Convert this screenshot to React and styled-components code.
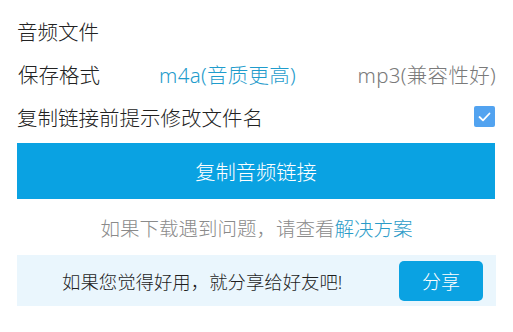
import React, { useState } from 'react'
import styled, { createGlobalStyle } from 'styled-components'

const GlobalStyle = createGlobalStyle`
  html, body {
    margin: 0;
    padding: 0;
    background: #ffffff;
    font-family: "Noto Sans", "Noto Sans CJK SC", sans-serif;
    font-weight: 300;
  }
`

const Page = styled.main`
  padding: 9px 17px 0 17px;
  width: 479px;
`

const Row = styled.div`
  display: flex;
  align-items: center;
  height: 43px;
  font-size: 20.5px;
  color: #222;
`

const Label = styled.span`
  width: 141px;
  flex-shrink: 0;
  padding-left: 1px;
`

const Option = styled.span`
  font-size: 20.5px;
  letter-spacing: 0.3px;
  color: ${p => (p.active ? '#1f9ccc' : '#7a7a7a')};
  margin-left: ${p => (p.right ? 'auto' : '0')};
`

const Check = styled.span`
  margin-left: auto;
  margin-right: 1px;
  width: 21px;
  height: 21px;
  border-radius: 2px;
  background: #52a3f0;
  display: flex;
  align-items: center;
  justify-content: center;
`

const CopyButton = styled.button`
  display: block;
  width: 478px;
  height: 56px;
  margin-top: 5px;
  border: none;
  background: #0aa2e2;
  color: #ffffff;
  font-family: inherit;
  font-weight: inherit;
  font-size: 20.3px;
  cursor: pointer;
`

const Help = styled.p`
  margin: 0;
  height: 56px;
  display: flex;
  align-items: center;
  justify-content: center;
  font-size: 19.5px;
  color: #8a8a8a;
`

const Link = styled.a`
  color: #2a9bc8;
  text-decoration: none;
`

const SharePanel = styled.section`
  display: flex;
  align-items: center;
  height: 51px;
  width: 479px;
  background: #eaf6fd;
  padding: 0 13px 0 45px;
  box-sizing: border-box;
`

const ShareText = styled.span`
  font-size: 18.4px;
  color: #1e1e1e;
`

const ShareButton = styled.button`
  margin-left: auto;
  width: 84px;
  height: 40px;
  border: none;
  border-radius: 5px;
  background: #0aa2e2;
  color: #ffffff;
  font-family: inherit;
  font-weight: inherit;
  font-size: 19px;
`

export default function App() {
  const [format, setFormat] = useState('m4a')
  return (
    <Page>
      <GlobalStyle />
      <Row>音频文件</Row>
      <Row>
        <Label>保存格式</Label>
        <Option active={format === 'm4a'} onClick={() => setFormat('m4a')}>m4a(音质更高)</Option>
        <Option right active={format === 'mp3'} onClick={() => setFormat('mp3')}>mp3(兼容性好)</Option>
      </Row>
      <Row>
        复制链接前提示修改文件名
        <Check>
          <svg width="13" height="10" viewBox="0 0 13 10">
            <path d="M1.5 5 L5 8.3 L11.5 1.5" fill="none" stroke="#fff" strokeWidth="1.8" strokeLinecap="round" strokeLinejoin="round" />
          </svg>
        </Check>
      </Row>
      <CopyButton>复制音频链接</CopyButton>
      <Help>
        如果下载遇到问题，请查看<Link href="#">解决方案</Link>
      </Help>
      <SharePanel>
        <ShareText>如果您觉得好用，就分享给好友吧!</ShareText>
        <ShareButton>分享</ShareButton>
      </SharePanel>
    </Page>
  )
}
